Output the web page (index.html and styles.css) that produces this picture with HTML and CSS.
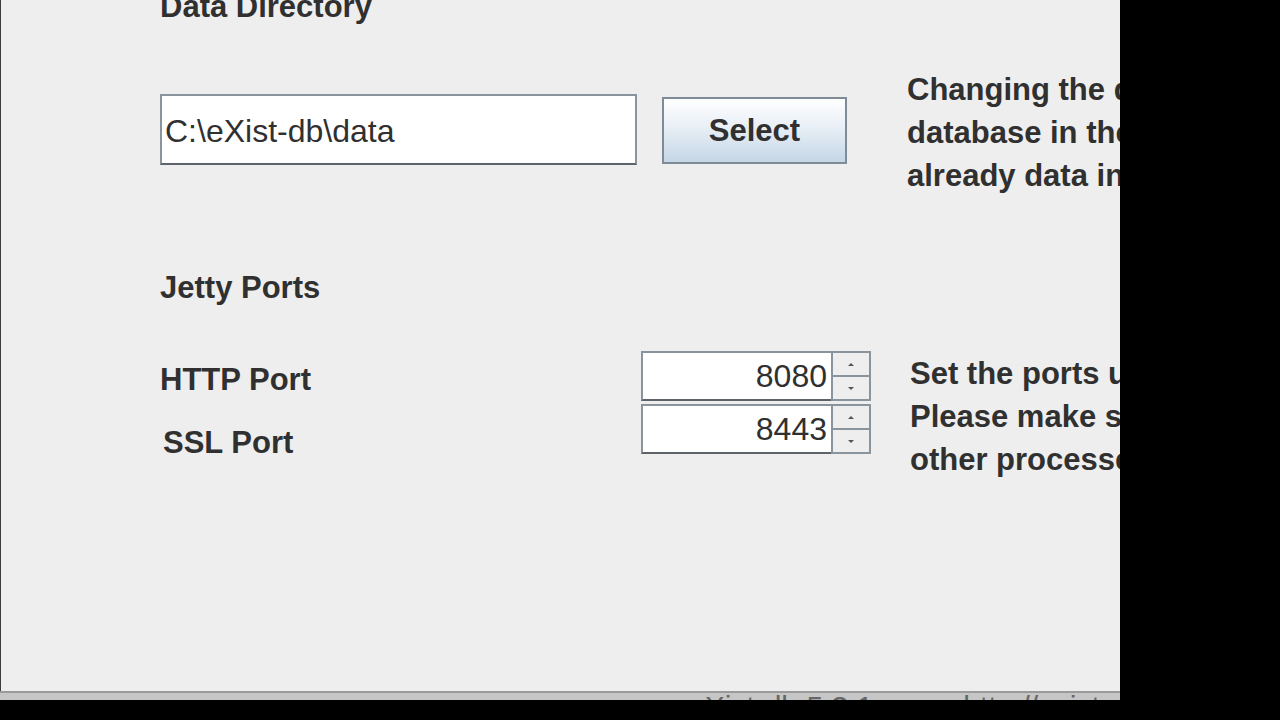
FILE: index.html
```html
<!DOCTYPE html>
<html lang="en">
<head>
    <meta charset="UTF-8">
    <meta name="viewport" content="width=device-width, initial-scale=1.0">
    <title>eXist-db Setup</title>
    <link rel="stylesheet" href="styles.css">
</head>
<body>
    <div class="window">
        <div class="panel">
            <!-- Data directory -->
            <section class="group">
                <h2 class="group-title first">Data Directory</h2>
                <div class="data-row">
                    <div class="text-field">C:\eXist-db\data</div>
                    <button class="select-btn">Select</button>
                    <p class="hint">Changing the data directory will create a new<br>database in the selected location unless there is<br>already data in it.</p>
                </div>
            </section>

            <!-- Jetty ports -->
            <section class="group">
                <h2 class="group-title">Jetty Ports</h2>
                <div class="ports-row">
                    <div class="port-labels">
                        <label>HTTP Port</label>
                        <label class="ssl">SSL Port</label>
                    </div>
                    <div class="spinners">
                        <div class="spinner">
                            <div class="spinner-value">8080</div>
                            <div class="spinner-btns">
                                <span class="arrow-btn"><svg width="8" height="5" viewBox="0 0 8 5"><path d="M4 1 L7 4 L1 4 Z" fill="#555"/></svg></span>
                                <span class="arrow-btn"><svg width="8" height="5" viewBox="0 0 8 5"><path d="M1 1 L7 1 L4 4 Z" fill="#555"/></svg></span>
                            </div>
                        </div>
                        <div class="spinner">
                            <div class="spinner-value">8443</div>
                            <div class="spinner-btns">
                                <span class="arrow-btn"><svg width="8" height="5" viewBox="0 0 8 5"><path d="M4 1 L7 4 L1 4 Z" fill="#555"/></svg></span>
                                <span class="arrow-btn"><svg width="8" height="5" viewBox="0 0 8 5"><path d="M1 1 L7 1 L4 4 Z" fill="#555"/></svg></span>
                            </div>
                        </div>
                    </div>
                    <p class="hint second">Set the ports used by Jetty.<br>Please make sure they are not used by<br>other processes.</p>
                </div>
            </section>
        </div>
        <div class="status-bar">
            <span class="status-text version">eXist-db 5.3.1</span>
            <span class="status-text site">http://exist-db.org</span>
        </div>
    </div>
</body>
</html>
```

FILE: styles.css
```css
* { box-sizing: border-box; margin: 0; padding: 0; }
body { background: #000; font-family: 'Liberation Sans', Arial, sans-serif; color: #303030; overflow: hidden; }

.window { width: 1120px; height: 700px; overflow: hidden; }
.panel {
    height: 691px; background: #eeeeee; border-left: 1px solid #3c3c3c;
    padding-left: 159px; overflow: hidden;
}

/* Section titles */
.group-title { font-size: 31px; font-weight: bold; line-height: 43px; margin-top: 69px; white-space: nowrap; }
.group-title.first { margin-top: -15px; }

.hint { flex: none; font-size: 31px; font-weight: bold; line-height: 43px; white-space: nowrap; }

/* Data directory row */
.data-row { display: flex; align-items: flex-start; margin-top: 40px; }
.text-field {
    flex: none; width: 477px; height: 71px; margin-top: 26px; background: #fff;
    border: 2px solid #8a949c; border-bottom-color: #5d6368;
    padding: 3px 0 0 3px; font-size: 32px; line-height: 64px; white-space: nowrap;
}
.select-btn {
    flex: none; width: 185px; height: 67px; margin: 29px 0 0 25px;
    border: 2px solid #7f8b96;
    background: linear-gradient(#ffffff, #e8eff6 45%, #c5d6e6);
    font-family: inherit; font-size: 31px; font-weight: bold; color: #303030;
}
.data-row .hint { margin-left: 60px; }

/* Ports */
.ports-row { display: flex; align-items: flex-start; margin-top: 42px; }
.port-labels { flex: none; width: 481px; margin-top: 7px; display: flex; flex-direction: column; gap: 20px; }
.port-labels label { font-size: 31px; font-weight: bold; line-height: 43px; white-space: nowrap; }
.port-labels .ssl { padding-left: 3px; }

.spinners { flex: none; width: 230px; display: flex; flex-direction: column; gap: 3px; }
.spinner { display: flex; height: 50px; }
.spinner-value {
    flex: none; width: 190px; background: #fff; border: 2px solid #8a949c; border-bottom-color: #5d6368;
    border-right: none; text-align: right; padding-right: 4px;
    font-size: 32px; line-height: 46px;
}
.spinner-btns { flex: none; width: 40px; display: flex; flex-direction: column; border: 2px solid #8a949c; }
.arrow-btn {
    flex: 1; display: flex; align-items: center; justify-content: center;
    background: #eeeeee;
}
.arrow-btn + .arrow-btn { border-top: 2px solid #8a949c; }
.hint.second { margin: 1px 0 0 39px; }

/* Clipped status bar at the bottom */
.status-bar {
    height: 9px; background: #c6c6c6; border-top: 2px solid #9a9a9a;
    display: flex; overflow: hidden;
}
.status-text { flex: none; font-size: 30px; line-height: 43px; color: #666; margin-top: -8px; white-space: nowrap; }
.status-text.version { margin-left: 688px; }
.status-text.site { margin-left: 90px; }
```
